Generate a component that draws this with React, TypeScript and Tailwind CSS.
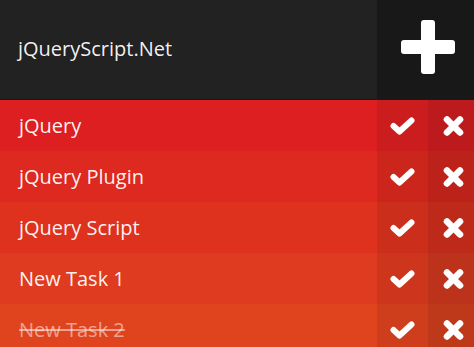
import React from 'react';

type Task = { id: number; title: string; done: boolean; bg: string };

const tasks: Task[] = [
  { id: 1, title: 'jQuery', done: false, bg: 'bg-[#dd1f21]' },
  { id: 2, title: 'jQuery Plugin', done: false, bg: 'bg-[#dd291f]' },
  { id: 3, title: 'jQuery Script', done: false, bg: 'bg-[#de321f]' },
  { id: 4, title: 'New Task 1', done: false, bg: 'bg-[#df3b20]' },
  { id: 5, title: 'New Task 2', done: true, bg: 'bg-[#e0441f]' },
];

const PlusIcon = () => (
  <svg width="54" height="54" viewBox="0 0 54 54" fill="currentColor">
    <rect x="20" y="0" width="14" height="54" rx="3" />
    <rect x="0" y="20" width="54" height="14" rx="3" />
  </svg>
);

const CheckIcon = () => (
  <svg width="25" height="18" viewBox="0 0 25 18" fill="none" stroke="currentColor" strokeWidth="6" strokeLinecap="round" strokeLinejoin="round">
    <polyline points="3.5,9 9.5,14.5 21.5,3.5" />
  </svg>
);

const CloseIcon = () => (
  <svg width="21" height="20" viewBox="0 0 21 20" fill="none" stroke="currentColor" strokeWidth="6.5" strokeLinecap="round">
    <line x1="4" y1="3.5" x2="17" y2="16.5" />
    <line x1="17" y1="3.5" x2="4" y2="16.5" />
  </svg>
);

export default function App() {
  return (
    <div className="w-[474px] h-[347px] overflow-hidden bg-[#222] font-['Open_Sans','Noto_Sans',sans-serif]">
      <div className="w-[478px]">
        {/* header */}
        <div className="flex h-[100px] bg-[#222] border-b border-[#1a1a1a]">
          <div className="flex-1 flex items-center pl-[18px] pb-[1px] text-[20px] font-medium text-white/95">
            jQueryScript.Net
          </div>
          <button className="w-[101px] flex items-center justify-center pb-[6px] bg-[#181818] text-white">
            <PlusIcon />
          </button>
        </div>

        {/* list */}
        <ul>
          {tasks.map((t) => (
            <li key={t.id} className={`flex h-[51px] ${t.bg}`}>
              <span
                className={`flex-1 flex items-center pl-[19px] text-[20px] font-medium ${
                  t.done ? 'line-through text-white/50' : 'text-white/95'
                }`}
              >
                {t.title}
              </span>
              <button className="w-[51px] flex items-center justify-center bg-black/[0.08] text-white">
                <CheckIcon />
              </button>
              <button className="w-[50px] flex items-center justify-center bg-black/[0.15] text-white">
                <CloseIcon />
              </button>
            </li>
          ))}
        </ul>
      </div>
    </div>
  );
}
